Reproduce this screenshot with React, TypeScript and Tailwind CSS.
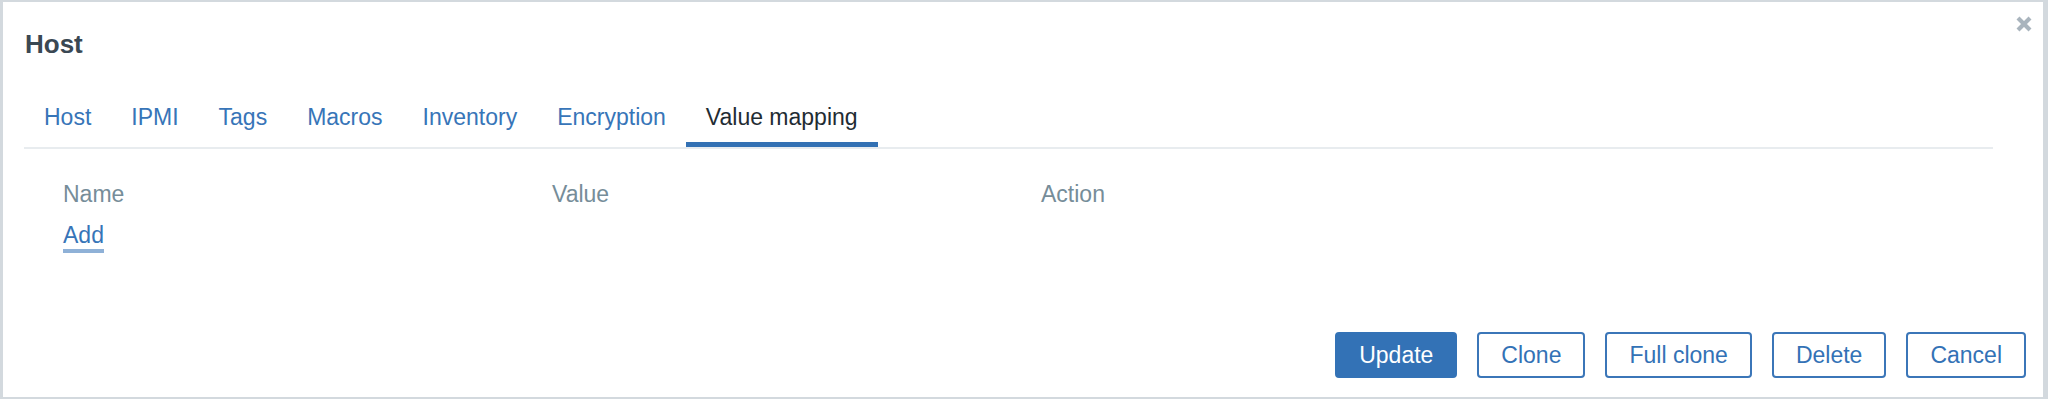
import React from 'react';

const TABS = ['Host', 'IPMI', 'Tags', 'Macros', 'Inventory', 'Encryption', 'Value mapping'];
const ACTIVE_TAB = 'Value mapping';

const FOOTER_BUTTONS = [
  { label: 'Update', primary: true },
  { label: 'Clone' },
  { label: 'Full clone' },
  { label: 'Delete' },
  { label: 'Cancel' },
];

const CloseIcon: React.FC = () => (
  <svg width="18" height="18" viewBox="0 0 18 18" className="block">
    <path d="M3 3 L15 15 M15 3 L3 15" stroke="#a9b4bd" strokeWidth="4.2" strokeLinecap="butt" />
  </svg>
);

const App: React.FC = () => {
  return (
    <div
      className="w-[2048px] h-[399px] bg-[#d3d9de] pt-[2px] pl-[3px] pr-[5px] pb-[2px]"
      style={{ fontFamily: '"Liberation Sans", Arial, Helvetica, sans-serif' }}
    >
      <div className="relative h-full bg-white flex flex-col pt-[27px] pb-[19px]">
        {/* Close */}
        <button className="absolute top-[13px] right-[10px]">
          <CloseIcon />
        </button>

        {/* Title */}
        <h1 className="pl-[22px] text-[26px] leading-[30px] font-bold text-[#3a4853]">Host</h1>

        {/* Tabs */}
        <div className="mt-[45px] ml-[21px] mr-[50px] flex border-b-2 border-[#e8ecef]">
          {TABS.map(tab => {
            const active = tab === ACTIVE_TAB;
            return (
              <div
                key={tab}
                className={`px-5 pb-[12px] text-[23px] leading-[26px] border-b-[5px] ${
                  active ? 'border-[#3371b4] text-[#1f2c33]' : 'border-transparent text-[#3775b8]'
                }`}
              >
                {tab}
              </div>
            );
          })}
        </div>

        {/* Value mapping table */}
        <div className="mt-[32px] ml-[60px]">
          <div className="grid grid-cols-[489px_489px_200px] text-[23px] leading-[26px] text-[#768d99]">
            <div>Name</div>
            <div>Value</div>
            <div>Action</div>
          </div>
          <div className="mt-[15px]">
            <a className="inline-block text-[23px] leading-[26px] text-[#3775b8] pb-[1px] border-b-4 border-[#8fb1d7] cursor-pointer">
              Add
            </a>
          </div>
        </div>

        {/* Footer buttons */}
        <div className="mt-auto pr-[17px] flex justify-end gap-[20px]">
          {FOOTER_BUTTONS.map(btn => (
            <button
              key={btn.label}
              className={`h-[46px] px-[22px] rounded-[4px] border-2 text-[23px] leading-[26px] ${
                btn.primary
                  ? 'bg-[#3372b6] border-[#3372b6] text-white'
                  : 'bg-white border-[#3b76b8] text-[#3372b6]'
              }`}
            >
              {btn.label}
            </button>
          ))}
        </div>
      </div>
    </div>
  );
};

export default App;
